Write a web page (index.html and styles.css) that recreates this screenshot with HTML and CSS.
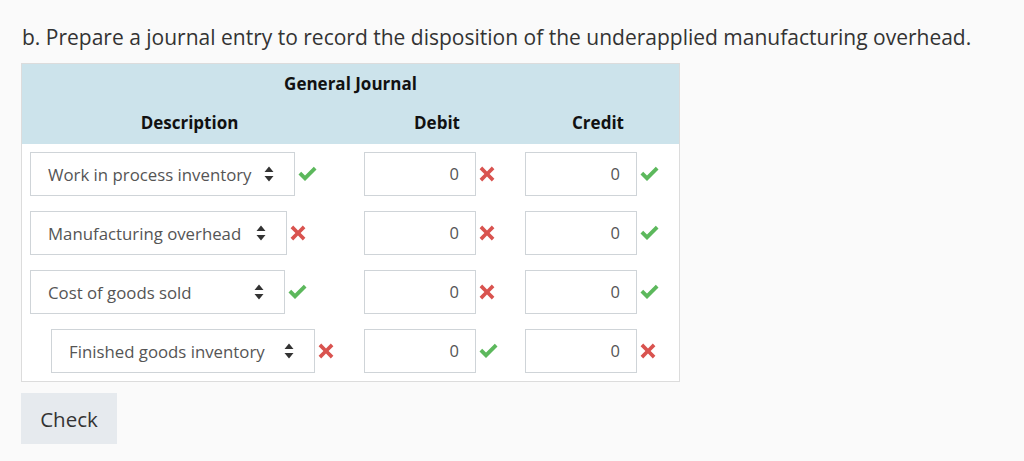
FILE: index.html
```html
<!DOCTYPE html>
<html>
<head>
<meta charset="utf-8">
<link rel="stylesheet" href="styles.css">
</head>
<body>
<svg width="0" height="0" class="defs">
  <defs>
    <symbol id="ok" viewBox="0 0 21 16"><path d="M1.5 8.5 L4.2 5.8 L8 9.6 L16.8 0.8 L19.5 3.5 L8 15 Z" fill="#5cb85c"/></symbol>
    <symbol id="no" viewBox="0 0 16 16"><path d="M3.2 0.6 L8 5.4 L12.8 0.6 L15.4 3.2 L10.6 8 L15.4 12.8 L12.8 15.4 L8 10.6 L3.2 15.4 L0.6 12.8 L5.4 8 L0.6 3.2 Z" fill="#d9534f"/></symbol>
    <symbol id="sort" viewBox="0 0 10 16"><path d="M5 0.5 L9.5 6 L0.5 6 Z M5 15.5 L0.5 10 L9.5 10 Z" fill="#333"/></symbol>
  </defs>
</svg>
<p class="prompt">b. Prepare a journal entry to record the disposition of the underapplied manufacturing overhead.</p>
<div class="journal">
  <div class="head">
    <div class="title">General Journal</div>
    <div class="cols">
      <div>Description</div>
      <div>Debit</div>
      <div>Credit</div>
    </div>
  </div>
  <div class="body">
    <div class="row">
      <div class="desc"><div class="sel w1"><span>Work in process inventory</span><svg class="arrow"><use href="#sort"/></svg></div><svg class="ok"><use href="#ok"/></svg></div>
      <div class="amt"><div class="num">0</div><svg class="no"><use href="#no"/></svg></div>
      <div class="amt"><div class="num">0</div><svg class="ok"><use href="#ok"/></svg></div>
    </div>
    <div class="row">
      <div class="desc"><div class="sel w2"><span>Manufacturing overhead</span><svg class="arrow"><use href="#sort"/></svg></div><svg class="no"><use href="#no"/></svg></div>
      <div class="amt"><div class="num">0</div><svg class="no"><use href="#no"/></svg></div>
      <div class="amt"><div class="num">0</div><svg class="ok"><use href="#ok"/></svg></div>
    </div>
    <div class="row">
      <div class="desc"><div class="sel w3"><span>Cost of goods sold</span><svg class="arrow"><use href="#sort"/></svg></div><svg class="ok"><use href="#ok"/></svg></div>
      <div class="amt"><div class="num">0</div><svg class="no"><use href="#no"/></svg></div>
      <div class="amt"><div class="num">0</div><svg class="ok"><use href="#ok"/></svg></div>
    </div>
    <div class="row">
      <div class="desc indent"><div class="sel w4"><span>Finished goods inventory</span><svg class="arrow"><use href="#sort"/></svg></div><svg class="no"><use href="#no"/></svg></div>
      <div class="amt"><div class="num">0</div><svg class="ok"><use href="#ok"/></svg></div>
      <div class="amt"><div class="num">0</div><svg class="no"><use href="#no"/></svg></div>
    </div>
  </div>
</div>
<div class="actions"><button class="check">Check</button></div>
</body>
</html>
```

FILE: styles.css
```css
html, body {
  margin: 0;
  padding: 0;
  background: #fafafa;
  font-family: "Open Sans", "Liberation Sans", sans-serif;
  color: #333;
}
.defs { position: absolute; width: 0; height: 0; }
body { padding: 22px 0 0 21px; }
.prompt {
  margin: 0 0 0 1px;
  font-size: 21px;
  line-height: 30px;
  color: #333;
}
.journal {
  margin-top: 11px;
  width: 657px;
  border: 1px solid #dcdcdc;
  background: #fff;
}
.head {
  background: #cce3eb;
  height: 80px;
  font-weight: 700;
  font-size: 17px;
  color: #111;
}
.title {
  text-align: center;
  padding-top: 9px;
  line-height: 22px;
}
.cols {
  display: grid;
  grid-template-columns: 335px 160px 1fr;
  margin-top: 17px;
  line-height: 22px;
  text-align: center;
}
.body {
  padding: 8px 0 8px;
  display: flex;
  flex-direction: column;
  gap: 15px;
}
.row {
  display: grid;
  grid-template-columns: 335px 160px 1fr;
  height: 44px;
}
.desc, .amt {
  display: flex;
  align-items: center;
}
.desc { padding-left: 8px; }
.desc.indent { padding-left: 29px; }
.amt { padding-left: 7px; }
.amt + .amt { padding-left: 8px; }
.sel {
  box-sizing: border-box;
  height: 44px;
  border: 1px solid #cfd4d8;
  background: #fff;
  display: flex;
  align-items: center;
  justify-content: space-between;
  padding: 0 20px 0 17px;
  font-size: 16.8px;
  color: #555;
}
.w1 { width: 265px; }
.w2 { width: 257px; }
.w3 { width: 255px; }
.w4 { width: 264px; }
.arrow { width: 10px; height: 16px; flex: none; }
.num {
  box-sizing: border-box;
  width: 112px;
  height: 44px;
  border: 1px solid #cfd4d8;
  background: #fff;
  text-align: right;
  padding-right: 16px;
  font-size: 16.5px;
  line-height: 42px;
  color: #555;
}
.ok { width: 21px; height: 16px; margin-left: 2px; }
.no { width: 16px; height: 16px; margin-left: 3px; }
.actions { margin-top: 11px; }
.check {
  border: 0;
  background: #e6eaee;
  width: 96px;
  height: 51px;
  font-family: "Open Sans", "Liberation Sans", sans-serif;
  font-size: 20.5px;
  color: #333;
  padding: 0;
}
```
